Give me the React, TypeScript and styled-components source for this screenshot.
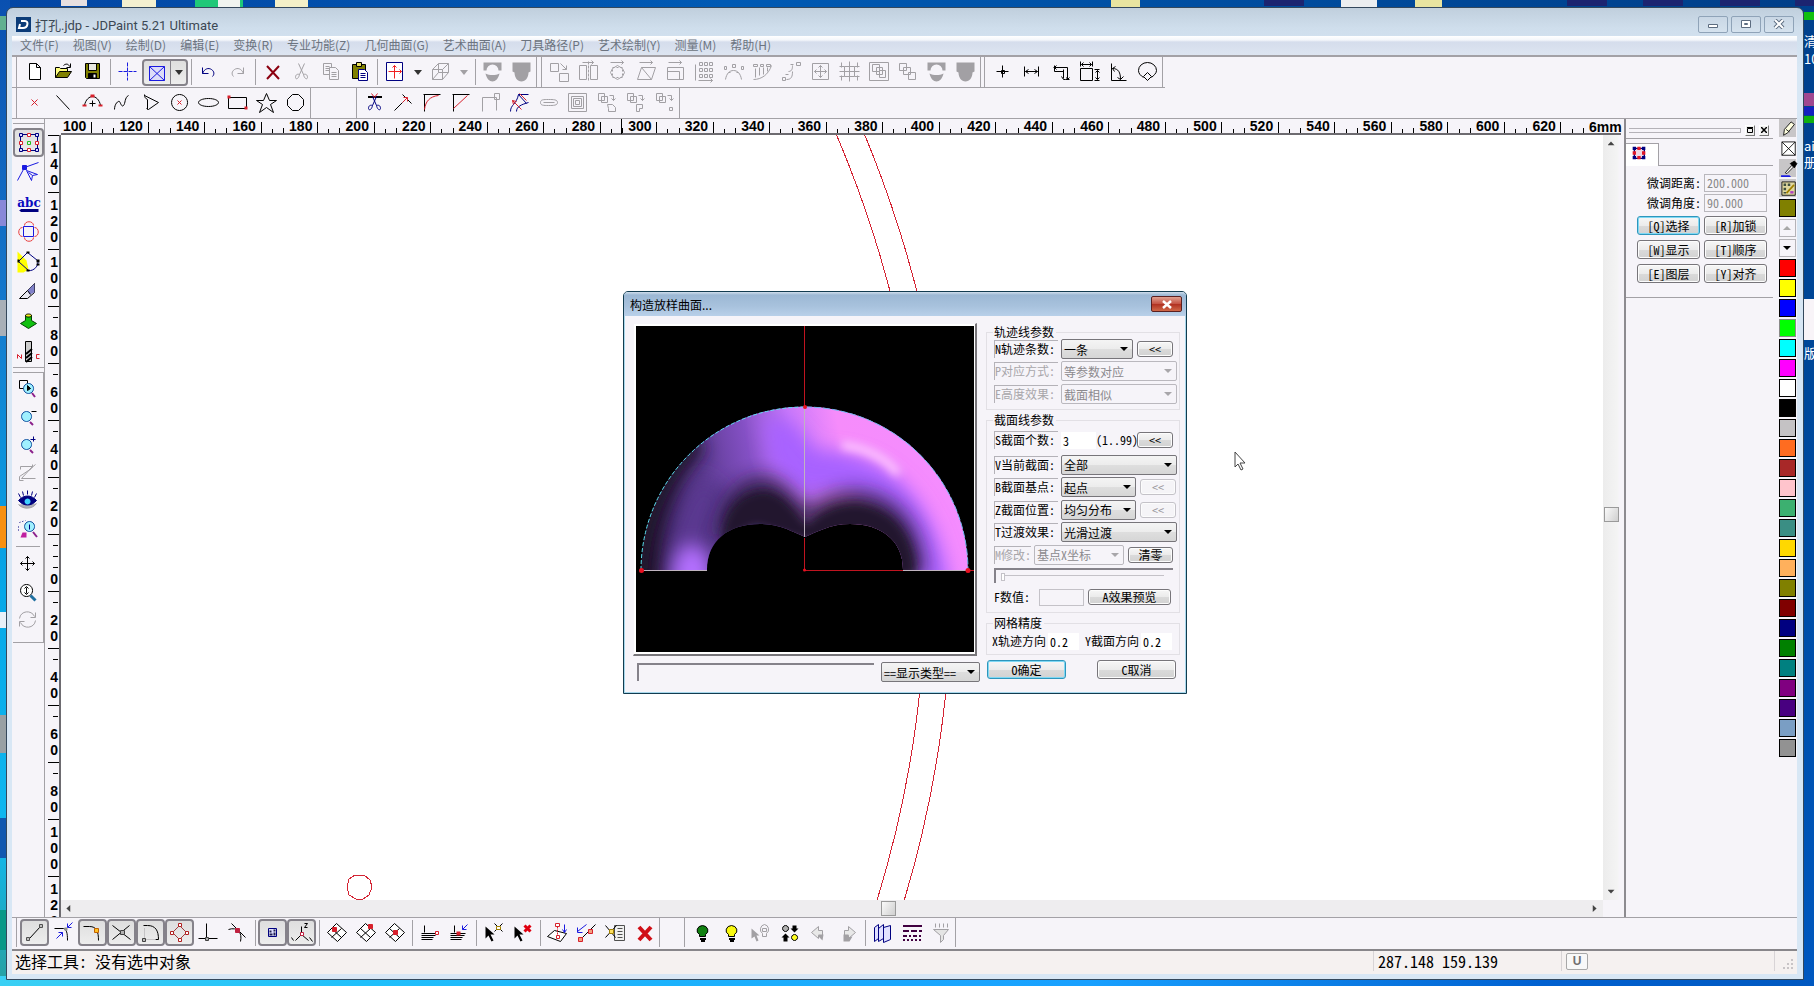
import React from "react";
import styled, { createGlobalStyle, css } from "styled-components";

const SONG = `"Noto Sans CJK SC", sans-serif`;
const LINE = "#a3a1a6";
const FACE = "#f6f4f9";

const GlobalStyle = createGlobalStyle`
  * { box-sizing: border-box; }
  body { margin: 0; overflow: hidden; font-family: ${SONG}; font-size: 12px; color: #000; }
  button, input, select { font: inherit; color: inherit; }
`;

/* ---------- icons ---------- */

type Part = [d: string, stroke: string, fill?: string, width?: number, dash?: string];
const G = "#a2a0a4";
const K = "#000";
const R = "#d8202c";
const B = "#1a1ae0";
const N = "#000080";
const Y = "#a08000";

const ICONS: Record<string, Part[]> = {
  new: [["M7 4h7l4 4v12H7zM14 4v4h4", K, "#fff"]],
  open: [["M4 18V8h4l1 1h7v3", K, "#ffff80"], ["M4 18l4-6h12l-4 6z", K, "#808000"], ["M12 6c2-2 5-2 6 1M19 4v4h-4", K]],
  save: [["M5 4h14v15H6l-1-1z", K, "#808000"], ["M8 4h8v7H8z", K, "#e8e8e0"], ["M8 14h8v5H8z", K, K], ["M13 15h2v3h-2z", "none", "#fff"]],
  cross: [["M12 3v18", B, "none", 1, "4 1"], ["M3 12h18", B, "none", 1, "4 1"]],
  boxx: [["M5 5h15v14H5z", B, "#dcdcf8"], ["M5 5l15 14M20 5L5 19", B]],
  undo: [["M6 8v6h6M6 14c2-5 6-6 9-4s3 5 1 7", N]],
  redo: [["M18 8v6h-6M18 14c-2-5-6-6-9-4s-3 5-1 7", G]],
  del: [["M6 6l12 13M18 6L6 19", "#8c0010", "none", 2]],
  cut: [["M9 4l5 11M15 4l-5 11M10 15c-3-1-4 1-4 3s3 2 4-3M14 15c3-1 4 1 4 3s-3 2-4-3", G]],
  copy: [["M5 4h8v11H5zM7 7h4M7 9h4M7 11h4", G], ["M11 8h6l3 3v9h-9zM13 13h5M13 15h5M13 17h5", G, FACE]],
  paste: [["M5 5h13v14H5z", K, "#808000"], ["M9 3h5v4H9z", K, "#e8e060"], ["M11 10h6l3 3v8h-9z", N, "#fff"], ["M13 14h5M13 16h5M13 18h5", N]],
  axes: [["M4 3h16v18H4z", N, "#fff"], ["M12 6v13M6 12h13M10 8l2-2 2 2M17 10l2 2-2 2", "#f02020"]],
  cube: [["M4 10h10v10H4zM4 10l6-6h10l-6 6M20 4v9l-6 7M10 4v9H20M10 13l-6 7", G]],
  shieldA: [["M3 3h18v8h-3a6 6 0 0 0-12 0H3z", "none", G], ["M5 14c4 2 10 2 14 0c-1 5-4 8-7 8s-6-3-7-8z", "none", G]],
  shieldB: [["M3 3h18v9l-2 1c0 5-3 9-7 9s-7-4-7-9l-2-1z", "none", G]],
  moveDup: [["M3 4h8v8H3zM12 14h9v8h-9zM13 4l6 6M19 6v4h-4", G]],
  mirror: [["M3 6h7v14H3zM14 6h7v14h-7z", G], ["M12 2v20", G, "none", 1, "3 1"], ["M6 3h11M15 1l2 2-2 2", G]],
  rotate: [["M12 6l5 3 2 4-2 4-5 3-5-3-2-4 2-4zM5 3h13M16 1l2 2-2 2", G], ["M7 8h10v10H7z", G, "none", 1, "2 2"]],
  shear: [["M3 20l4-12h14l-4 12zM7 8l10 12M5 3h13M16 1l2 2-2 2", G]],
  scale: [["M4 8h16v12H4zM4 12h12v8M5 3h13M16 1l2 2-2 2", G]],
  array: [["M7 3h3v3H7zM12 3h3v3h-3zM17 3h3v3h-3zM7 9h3v3H7zM12 9h3v3h-3zM17 9h3v3h-3zM7 15h3v3H7zM12 15h3v3h-3zM17 15h3v3h-3zM3 5v16M6 21h14M18 19l2 2-2 2", G]],
  arcArr: [["M4 20c1-6 4-9 8-9s7 3 8 9M3 7h2v3H3zM11 5h3v3h-3zM20 7h2v3h-2zM7 13h2M15 13h2", G]],
  wrap: [["M3 5h4v2H3zM10 5h3v2h-3zM16 5h4v2h-4zM5 9v9M9 8v8M13 8v7M17 8v4M3 20c8 0 15-5 18-14", G]],
  path: [["M3 18h3v3H3zM6 15h3M9 12c4 0 4-4 4-6M11 5h3M17 3h4v3h-4zM7 20c5 0 6-3 6-8", G]],
  center: [["M4 4h16v16H4zM12 6v12M6 12h12M10 8l2-2 2 2M10 16l2 2 2-2M8 10l-2 2 2 2M16 10l2 2-2 2", G]],
  centerB: [["M7 7h10v10H7zM12 2v20M2 12h20M4 3v5M20 3v5M4 16v5M20 16v5M2 7h5M17 7h5M2 17h5M17 17h5", G]],
  group: [["M3 3h19v18H3zM6 5h7v7H6zM10 8h6v7h-6zM13 11h6v7h-6z", G]],
  ungroup: [["M4 4h7v7H4zM8 8h7v7H8zM13 13h7v7h-7z", G]],
  mPoint: [["M12 6v12M6 12h12M11 11h3v3h-3z", K]],
  mDist: [["M5 7v10M19 7v10M6 12h12M9 10l-3 2 3 2M15 10l3 2-3 2", K]],
  mStep: [["M6 6v6M5 8h14v12M8 6L6 8l2 2M15 10v9M13 17l2 3h2M9 12h6M17 20h4M6 12h5M18 18l1 2 2-2", K]],
  mBox: [["M3 9h12v12H3zM3 2v5M15 2v5M4 5h10M6 3L4 5l2 2M12 3l2 2-2 2M17 10h5M17 21h5M20 11v9M18 13l2-2 2 2M18 18l2 2 2-2", K]],
  mAng: [["M5 4v17h15M6 9c6 0 8 4 8 11M6 9l3-2M6 9l2 3M14 20l-3-2M14 20l3-3", K]],
  mRad: [["M3 11a9 8 0 0 1 18 0c0 3-3 5-5 7M3 11c0 3 2 5 5 7M12 21l-4-4 4-4 4 4z", K]],
  pt: [["M9 9l6 6M15 9l-6 6", R]],
  line: [["M5 5l13 14", K]],
  arc3: [["M4 15c1-6 5-9 8-9s7 3 8 9", K], ["M2 14h4v2H2zM10 4h4v3h-4zM18 14h4v2h-4z", "none", R], ["M12 10v6M9 13h6", K]],
  curve: [["M5 19c0-6 4-9 5-8s2 6 4 4 1-8 5-10", K]],
  poly: [["M6 4c0 3 1 4 3 5M6 5l14 7-10 7-2-1M9 9v10", K]],
  circle: [["M12 4a8 8 0 1 0 .1 0z", K], ["M10 10l4 4M14 10l-4 4", R]],
  ellipse: [["M12 8c6 0 10 2 10 4s-4 4-10 4-10-2-10-4 4-4 10-4z", K]],
  rect: [["M3 7h18v11H3z", K], ["M2 5h3v3H2zM19 16h3v3h-3z", "none", R]],
  star: [["M12 3l3 7h7l-6 4 3 8-7-5-7 5 3-8-6-4h7z", K]],
  octa: [["M9 4h6l5 5v6l-5 5H9l-5-5V9z", K]],
  trim: [["M5 6h14", K, "none", 2], ["M10 6l4 9M14 6l-4 9M10 15c-3-1-4 1-4 3s3 2 4-3M14 15c3-1 4 1 4 3s-3 2-4-3", N], ["M9 3l3 4 3-4", R]],
  extend: [["M3 20l8-8M11 4l9 9", K], ["M11 12l5-5M12 7h4v4", R]],
  fillet: [["M3 4h17M4 4v17", K], ["M4 19C5 11 9 6 18 5", R]],
  chamfer: [["M3 4h17M4 4v17", K], ["M4 18L18 5", R]],
  corner: [["M4 7h14v13M4 7v14M16 3h5v6h-5z", G]],
  offset: [["M3 21c0-7 6-7 8-17h10M9 21c0-5 5-7 12-9M11 4l8 9", N], ["M5 10l9 9M5 10l1 4M5 10l4 1M12 3l7 7", R]],
  slot: [["M4 12c0-3 3-3 8-3s9 0 9 3-4 3-9 3-8 0-8-3zM7 12h11", G]],
  spiral: [["M3 3h18v18H3zM6 6h12v12H6zM8 8h8v8H8zM10 10h4v4h-4z", G]],
  boolA: [["M4 3h6v7H4zM7 6h6v6H7zM15 5h4v5M17 8l2 2 2-2M13 14h5l3 3v4h-7v-3z", G]],
  boolB: [["M4 3h6v7H4zM7 6h6v6H7zM15 5h4v5M17 8l2 2 2-2M13 14h6v4h-3v3h-3z", G]],
  boolC: [["M4 3h6v7H4zM7 6h6v6H7zM15 5h4v5M17 8l2 2 2-2M17 17h3v3h-3z", G]],
  select: [["M4 4h17v16H4z", N], ["M3 3h3v3H3zM19 3h3v3h-3zM3 18h3v3H3zM19 18h3v3h-3z", N, "#d8d8ff"], ["M11 3h3v3h-3zM11 18h3v3h-3zM3 11h3v3H3zM19 11h3v3h-3z", R, "#fff"], ["M11 11h3v3h-3z", "#20c020"]],
  selectTab: [["M5 5h15v15H5z", N, "#f0d8e4", 2], ["M3 3h5v5H3zM17 3h5v5h-5zM3 17h5v5H3zM17 17h5v5h-5z", "none", N], ["M10 3h5v5h-5zM10 17h5v5h-5zM3 10h5v5H3zM17 10h5v5h-5z", "none", "#e01828"]],
  node: [["M1 21L8 8l14-5", B], ["M6 6h4v4H6z", B, B], ["M10 11l11 4-5 1M10 11l5 10 1-5M12 13l4 3", B]],
  text: [["M4 20h18M4 22h18M3 21h19", N, "none"]],
  shape: [["M7 7h10v10H7z", B], ["M8 6c0-5 9-5 9 0M18 8c5 0 5 9 0 9M17 18c0 5-9 5-9 0M6 17c-5 0-5-9 0-9", "#e84040"]],
  region: [["M1 2l9 9 2 9-5 3H1z", "none", "#ffff00"], ["M2 12l9-9 10 8c2 5-4 11-9 10z", N, "none"], ["M10 2h3v2h-3zM20 10h3v3h-3zM10 20h3v2h-3zM20 14h3v2h-3zM1 10h2v3H1z", "none", K]],
  blade: [["M3 19l8-8 7-7v9l-7 6z", K, "#e8e8f0"], ["M11 11l7-7v9l-5 2z", "none", "#8080c8"], ["M11 11l3 4", K]],
  relief: [["M4 14l5-3V6h6v5l5 3-8 5z", "#004000", "#10c010"], ["M9 6c0-2 6-2 6 0s-6 2-6 0z", K, "#f0f020"]],
  nc: [["M9 2h6v20H9z", K, "#ccc"], ["M9 14l6-5M9 18l6-5M9 22l6-5", K, "none", 2], ["M1 19v-4l4 4v-4M23 15h-3v4h3", R]],
  zWin: [["M4 4h8v8H4z", K], ["M13 7a5 5 0 1 0 .1 0z", "#1050a0", "#a0f0ff"], ["M12 9v5l3-2z", K, K], ["M16 16l3 4", "#8c208c", "none", 2]],
  zOut: [["M11 7a5 5 0 1 0 .1 0z", "#1050a0", "#a0f0ff"], ["M14 17l3 3", "#8c208c", "none", 2], ["M16 7h5", K]],
  zIn: [["M11 7a5 5 0 1 0 .1 0z", "#1050a0", "#a0f0ff"], ["M14 17l3 3", "#8c208c", "none", 2], ["M15 7h5M18 4v5", N]],
  zPrev: [["M5 6h12L6 18h14M5 6v3M17 4v3M14 9l6-5M8 20H4v-4l12-8", G]],
  eye: [["M3 16c4 5 14 5 18-1", G, "#b0b0b8"], ["M3 12c5-6 13-6 18 0-5 6-13 6-18 0z", N, N], ["M12 10a3 3 0 1 0 .1 0z", "none", "#40d0ff"], ["M5 9L3 5M8 7L7 3M12 6V2M16 7l1-4M19 9l2-4", N]],
  zObj: [["M4 6l6-2M3 10v5", N, "none", 1, "1 2"], ["M14 5a5 5 0 1 0 .1 0z", "#1050a0", "#a0f0ff"], ["M14 8v5", N], ["M17 15l4 5", "#8c208c", "none", 2], ["M7 16h4v5H5z", "none", "#c020a0"]],
  pan: [["M12 5v14M5 12h14M10 7l2-2 2 2M10 17l2 2 2-2M7 10l-2 2 2 2M17 10l2 2-2 2", K]],
  zDyn: [["M11 5a6 6 0 1 0 .1 0z", K, "#fff"], ["M11 8v6M9 9l2-2 2 2M9 13l2 2 2-2", K], ["M15 16l5 5", "#2070a0", "none", 3]],
  refresh: [["M4 11c1-8 12-9 15-2M20 5v5h-5M20 13c-1 8-12 9-15 2M4 19v-5h5", G]],
  sEnd: [["M7 18L18 6", K], ["M4 17h3v3H4zM17 4h3v3h-3z", "#505050", "#c0c0c0"]],
  sNear: [["M3 8h9c3 1 4 4 4 12", K], ["M21 2l-5 5M16 3v4h4M5 18l6-6M7 12h4v4", B], ["M13 7h3v3h-3z", "none", "#909090"]],
  sMid: [["M3 6h6c7 0 9 5 9 14", K], ["M14 8h4v4h-4z", "#c06000", "#ffc020"]],
  sInt: [["M3 5l18 14M3 19L20 5", K], ["M11 10h4v4h-4z", "#404040", "#b0b0b0"]],
  sCen: [["M5 5h4c8 0 11 5 11 14h-3", K], ["M6 8v10M8 19h9", G, "none", 1, "1 1"], ["M4 18h3v3H4z", "#404040", "#c0c0c0"]],
  sQuad: [["M12 5l7 7-7 7-7-7z", "#a04040"], ["M11 3h3v3h-3zM11 18h3v3h-3zM3 11h3v3H3zM18 11h3v3h-3z", "#b02020", "#fff"]],
  sPerp: [["M10 3v15M2 18h19", K], ["M9 17h3v3H9z", "#404040", "#b0b0b0"]],
  sTan: [["M3 9c9-3 14 3 12 12M6 3l14 14", K], ["M10 8h4v4h-4z", "#c02040", "#c02040"]],
  sGrid: [["M8 8h8v8H8z", N, "#dfe0ff"], ["M9 10h2v2H9zM13 12h2v3h-2zM13 9h2v2h-2zM9 13h3v2H9z", "none", "#202050"]],
  sAxis: [["M12 6v8l-6 6M12 14l7 6M2 17l2 3M20 17l3 4M15 3h3l-3 4h3", K], ["M11 12h3v3h-3z", "#c02040", "#fff"]],
  fA: [["M12 3l10 9-9 9-10-9zM7 8l10 9M17 8L7 17", K, "#fff"], ["M8 7h4v4H8z", R, R]],
  fB: [["M12 3l10 9-9 9-10-9zM7 8l10 9M17 8L7 17", K, "#fff"], ["M15 4h4v4h-4z", R, R]],
  fC: [["M12 3l10 9-9 9-10-9zM7 8l10 9M17 8L7 17", K, "#fff"], ["M11 10h4v4h-4z", R, R]],
  lA: [["M7 5v7M4 13h15M4 15h14M4 17h12M4 19h11", K], ["M18 11h3v3h-3z", R, "#fff"]],
  lB: [["M8 5v7M4 13h15M4 15h14M4 17h12M4 19h11", K], ["M21 4l-5 5M16 5v4h4", B], ["M10 11h4v4h-4z", "none", R]],
  pA: [["M4 6v12l3-3 3 6 2-1-3-6h4z", "none", K], ["M13 3l8 8M21 3l-8 8", K], ["M15 6h4v3h-4z", Y, "#fff"]],
  pB: [["M4 6v12l3-3 3 6 2-1-3-6h4z", "none", K], ["M14 5l6 6M20 5l-6 6", "#e00010", "none", 3]],
  plA: [["M2 16l7-6 12 3-6 8z", K, "#fff"], ["M12 6v10", R, "none", 1, "2 1"], ["M10 3h4v3h-4zM11 15h3v3h-3z", R, "#fff"], ["M19 4v8M17 9l2 3 2-3", B]],
  plB: [["M5 20L21 4", K], ["M3 11l9-7M3 7v5h5", B], ["M4 17h4v4H4zM14 9h4v4h-4z", R, "#f0a080"]],
  plC: [["M11 5h10v15H11zM14 8h5M14 11h5M14 14h5M14 17h5", "#505050", "#f0f0f0"], ["M2 5l10 12M2 17L13 5", K], ["M6 9h4v4H6z", Y, "#ffe060"]],
  delB: [["M6 6l12 13M18 6L6 19", "#d01018", "none", 4]],
  bulbG: [["M12 5a6 5 0 0 0-3 9v2h6v-2a6 5 0 0 0-3-9z", K, "#108010"], ["M9 18h6M10 20h4", K, "none", 2]],
  bulbY: [["M12 5a6 5 0 0 0-3 9v2h6v-2a6 5 0 0 0-3-9z", K, "#f8f810"], ["M9 18h6M10 20h4", K, "none", 2]],
  bulbP: [["M3 8v10l3-2 2 5 2-1-2-5h3z", "none", G], ["M16 4a5 5 0 0 0-2 9v3h4v-3a5 5 0 0 0-2-9zM14 8h4v3h-4z", G]],
  swap: [["M8 5a3 3 0 1 0 .1 0z", K, "#b0b0b0"], ["M17 14a3 3 0 1 0 .1 0z", K, "#ffff20"], ["M15 5h4v3h2l-4 4-4-4h2zM6 21V17H4l4-4 4 4h-2v4z", "none", K]],
  left: [["M5 12l7-6v4h4v5h-4v3z", G, "#e8e8e8"], ["M12 14h5l-1 6-4-4z", "none", G]],
  right: [["M20 12l-7-6v4H9v5h4v3z", G, "#e8e8e8"], ["M8 14h5v3l4-1-3 5H8z", "none", G]],
  layers: [["M4 7l4-3v14l-4 3zM8 8l5-4v14l-5 3zM13 7l7-2v14l-7 3z", N, "#e0e0ff"]],
  styles: [["M3 5h19", "#400040", "none", 2], ["M3 10h19", "#400040", "none", 2, "6 2"], ["M3 15h19", "#400040", "none", 2, "4 2 2 2"], ["M3 19h19", "#400040", "none", 2, "2 2"]],
  filter: [["M5 9h15l-5 6v4l-3 3v-7zM7 3v4M11 3v4M15 3v4M19 3v4", G, "#e4e4e4"]],
  pencil: [["M6 20l1-7 8-9 4 3-8 10z", K, "#ffffe0"], ["M9 13l4 3", K]],
  noFill: [["M4 4h16v16H4zM4 4l16 16M20 4L4 20", K, "#fff"]],
  dropper: [["M8 17l8-9 2 2-8 8z", K, "#fff"], ["M14 6l5 5 3-5-3-3z", K, K], ["M3 20h10l2 2H3z", "none", B]],
  palette: [["M4 4h16v16H4z", K, "#e0d8a0"], ["M6 6h3v3H6zM11 6h3v3h-3zM6 11h3v3H6zM6 16h3v2H6z", "none", "#405040"], ["M9 17l9-10", Y, "none", 2], ["M14 15h4v3h-4z", "none", "#b040c0"]],
};

const IconSvg = styled.svg`
  display: block;
  flex: none;
`;

const Icon = ({ name, size = 24 }: { name: string; size?: number }) => (
  <IconSvg width={size} height={size} viewBox="0 0 24 24" aria-hidden="true">
    {ICONS[name].map(([d, stroke, fill = "none", w = 1, dash], i) => (
      <path key={i} d={d} stroke={stroke} fill={fill} strokeWidth={w} strokeDasharray={dash} transform={w % 2 ? "translate(-.5 -.5)" : undefined} />
    ))}
    {name === "text" && (
      <text x="12" y="17" textAnchor="middle" fontFamily="DejaVu Serif, serif" fontWeight="700" fontSize="12" fill="#0808c0">abc</text>
    )}
  </IconSvg>
);

/* ---------- desktop and window frame ---------- */

const Desktop = styled.div`
  position: relative;
  display: flex;
  height: 100vh;
  padding: 7px 10px 6px 6px;
  overflow: hidden;
  background:
    linear-gradient(90deg, #3ad0f4 0, #1fc0fb 20%, #18a0ff 60%, #0060d0 85%, #0058c0 100%) bottom / 100% 10px no-repeat,
    linear-gradient(#00408c, #00489a 40%, #0058c0) right / 12px 100% no-repeat,
    linear-gradient(#0a50b0, #1478cc 30%, #06a8e8 60%, #10b8f0 85%, #28a0a0) left / 10px 100% no-repeat,
    linear-gradient(90deg, #0446a4, #005ab4 40%, #003e88);
`;

const Scrap = styled.span<{ $x: string; $y: number; $w: number; $h: number; $c: string }>`
  position: absolute;
  left: ${(p) => p.$x};
  top: ${(p) => p.$y}px;
  width: ${(p) => p.$w}px;
  height: ${(p) => p.$h}px;
  background: ${(p) => p.$c};
`;

const DeskLabel = styled.span<{ $y: number }>`
  position: absolute;
  right: -4px;
  top: ${(p) => p.$y}px;
  width: 14px;
  color: #fff;
  font-size: 13px;
  line-height: 16px;
  white-space: nowrap;
`;

const Win = styled.div`
  position: relative;
  display: flex;
  flex: 1;
  flex-direction: column;
  min-width: 0;
  padding: 0 6px 5px 5px;
  border: 1px solid #34485c;
  border-radius: 7px 7px 0 0;
  background: linear-gradient(#c0cfdd, #cfdeec 20px, #d8e7f5 60px);
`;

const TitleBar = styled.header`
  display: flex;
  flex: none;
  align-items: center;
  height: 28px;
  padding: 4px 3px 0 4px;
  gap: 4px;
  color: #3c4854;
  font-family: Roboto, "Noto Sans CJK SC", sans-serif;
  font-size: 13px;
  white-space: nowrap;
`;

const Logo = styled.svg`
  flex: none;
`;

const TitleText = styled.h1`
  flex: 1;
  margin: 0;
  font: inherit;
`;

const CaptionButtons = styled.div`
  display: flex;
  gap: 3px;
`;

const CaptionButton = styled.button`
  display: grid;
  place-items: center;
  width: 30px;
  height: 17px;
  padding: 0;
  border: 1px solid #8fa3b8;
  border-radius: 2px;
  background: linear-gradient(#c9d7e5, #d5e2ee);
`;

const MenuBar = styled.nav`
  display: flex;
  flex: none;
  align-items: center;
  height: 19px;
  padding: 0 0 1px 8px;
  gap: 14px;
  background: linear-gradient(#fff 0, #f4f7fb 4px, #d5ddec 6px, #dde5f1 100%);
`;

const MenuItem = styled.button`
  padding: 0;
  border: 0;
  background: none;
  color: #6c7480;
  font-size: 12px;
  line-height: 18px;
  white-space: nowrap;
`;

/* ---------- toolbars ---------- */

const ToolbarArea = styled.div`
  flex: none;
  border-top: 2px solid ${LINE};
  background: ${FACE};
`;

const ToolbarRow = styled.div`
  display: flex;
  height: 31px;
  border-bottom: 1px solid ${LINE};
`;

const ToolRowShort = styled(ToolbarRow)`
  width: 1153px;
  max-width: 100%;
`;

const ToolGroup = styled.div<{ $gap?: number }>`
  display: flex;
  align-items: center;
  padding-left: 3px;
  margin-left: ${(p) => p.$gap ?? 4}px;
  border-left: 1px solid ${LINE};
  border-right: 1px solid ${LINE};
`;

const ToolButton = styled.button<{ $on?: boolean; $w?: number; $h?: number }>`
  display: grid;
  flex: none;
  place-items: center;
  width: ${(p) => p.$w ?? 29}px;
  height: ${(p) => p.$h ?? 27}px;
  padding: 0;
  border: 1px solid transparent;
  background: none;
  ${(p) =>
    p.$on &&
    css`
      border: 2px solid #85828a;
      border-radius: 4px;
      background: linear-gradient(#dedede, #ededed);
    `}
`;

const Sep = styled.span`
  flex: none;
  width: 1px;
  height: 26px;
  margin: 0 2px 0 3px;
  background: ${LINE};
`;

const Drop = styled.button`
  display: grid;
  flex: none;
  place-items: center;
  width: 17px;
  height: 26px;
  padding: 0;
  border: 0;
  background: none;
  &::after {
    content: "";
    border: 4px solid transparent;
    border-top: 5px solid #333;
    border-bottom: 0;
  }
  &:disabled::after { border-top-color: ${G}; }
`;

const SplitOn = styled.span`
  display: flex;
  flex: none;
  align-items: center;
  width: 46px;
  height: 27px;
  overflow: hidden;
  border: 2px solid #85828a;
  border-radius: 4px;
  background: linear-gradient(#dedede, #ededed);
  ${Drop} { border-left: 1px solid #85828a; }
`;

const Tool = ({ n, on }: { n: string; on?: boolean }) => (
  <ToolButton type="button" aria-label={n} aria-pressed={on} $on={on}>
    <Icon name={n} />
  </ToolButton>
);

const Tools = ({ list }: { list: string }) => (
  <>
    {list.split(" ").map((t, i) =>
      t === "|" ? <Sep key={i} /> : <Tool key={i} n={t.replace("*", "")} on={t.endsWith("*")} />
    )}
  </>
);

/* ---------- workspace ---------- */

const Main = styled.main`
  display: flex;
  flex: 1;
  min-height: 0;
  background: ${FACE};
`;

const SideTools = styled.aside`
  display: flex;
  flex: none;
  flex-direction: column;
  align-items: center;
  width: 33px;
  padding: 4px 0 0 1px;
  border-right: 1px solid ${LINE};
`;

const SideGroup = styled.div<{ $first?: boolean }>`
  display: flex;
  flex-direction: column;
  align-items: center;
  width: 100%;
  padding: ${(p) => (p.$first ? "4px 0 0" : "2px 0 8px")};
  margin-bottom: ${(p) => (p.$first ? 4 : 0)}px;
  border-top: 1px solid ${LINE};
  border-bottom: 1px solid ${LINE};
  border-right: ${(p) => (p.$first ? 0 : 1)}px solid ${LINE};
`;

const SideSep = styled.span`
  width: 24px;
  height: 1px;
  margin: 3px 0;
  background: ${LINE};
`;

const Workspace = styled.section`
  display: grid;
  flex: 1;
  grid-template-columns: 16px 1fr 18px;
  grid-template-rows: 16px minmax(0, 1fr) 17px;
  min-width: 0;
`;

const HRuler = styled.div`
  position: relative;
  display: flex;
  grid-column: 2 / 4;
  padding-left: 2px;
  border-bottom: 2px solid #6d6b70;
  font: bold 14px/16px "Liberation Sans", sans-serif;
`;

const HSeg = styled.div`
  display: flex;
  flex: 1 1 0;
  align-items: flex-end;
  min-width: 0;
`;

const HLabel = styled.span`
  flex: none;
  width: 28px;
  height: 15px;
`;

const HTick = styled.i<{ $h: number; $grow: number }>`
  flex: ${(p) => p.$grow} 1 0;
  height: ${(p) => p.$h}px;
  border-left: 1px solid #000;
`;

const HUnit = styled.span`
  flex: none;
  width: 32px;
`;

const HMarker = styled.i`
  position: absolute;
  left: 560px;
  top: 0;
  height: 15px;
  border-left: 1px solid #000;
`;

const VRuler = styled.div`
  grid-row: 2 / 4;
  overflow: hidden;
  border-right: 2px solid #6d6b70;
  font: bold 14px/16px "Liberation Sans", sans-serif;
`;

const VSeg = styled.div`
  position: relative;
  display: flex;
  flex-direction: column;
  align-items: flex-end;
  justify-content: flex-end;
  height: 57px;
  margin-left: 3px;
  padding: 0 1px 4px 0;
  border-top: 1px solid #000;
`;

const VTicks = styled.span`
  display: flex;
  flex: 1;
  flex-direction: column;
  align-items: flex-end;
  padding-top: 10px;
  gap: 10px;
  i { width: 5px; border-top: 1px solid #000; }
`;

const Canvas = styled.div`
  position: relative;
  grid-column: 2;
  grid-row: 2;
  overflow: hidden;
  background: #fff;
`;

const Drawing = styled.svg`
  position: absolute;
  inset: 0;
  width: 100%;
  height: 100%;
`;

const Scroll = styled.div<{ $v?: boolean }>`
  display: flex;
  flex-direction: ${(p) => (p.$v ? "column" : "row")};
  align-items: center;
  padding: ${(p) => (p.$v ? "5px 2px 5px 0" : "0 5px 0 4px")};
  background: ${(p) => (p.$v ? "linear-gradient(90deg,#ececec,#f4f4f4 15px,#f6f4f9 16px)" : "#eeedef")};
`;

const ScrollArrow = styled.button<{ $dir: "up" | "down" | "left" | "right" }>`
  flex: none;
  width: 7px;
  height: 7px;
  padding: 0;
  border: 0;
  background: #444;
  clip-path: ${(p) =>
    ({
      up: "polygon(50% 20%,100% 75%,0 75%)",
      down: "polygon(0 25%,100% 25%,50% 80%)",
      left: "polygon(20% 50%,75% 0,75% 100%)",
      right: "polygon(25% 0,80% 50%,25% 100%)",
    })[p.$dir]};
`;

const Space = styled.span<{ $grow: number }>`
  flex: ${(p) => p.$grow} 1 0;
`;

const Thumb = styled.span`
  flex: none;
  width: 15px;
  height: 15px;
  border: 1px solid #9a9a9a;
  background: linear-gradient(120deg, #fafafa, #cfcfcf);
`;

/* ---------- right panel ---------- */

const Panel = styled.aside`
  display: flex;
  flex: none;
  flex-direction: column;
  width: 149px;
  margin-left: 3px;
  border-left: 2px solid #8d8b90;
`;

const PanelHead = styled.div`
  display: flex;
  align-items: center;
  height: 20px;
  padding: 3px 4px 0 3px;
  gap: 4px;
  border-bottom: 1px solid ${LINE};
`;

const Grip = styled.span`
  flex: 1;
  height: 5px;
  border: 1px solid #b4b2b8;
  border-width: 1px 1px 1px 0;
`;

const MiniButton = styled.button`
  display: grid;
  place-items: center;
  width: 10px;
  height: 11px;
  padding: 0;
  border: 1px solid;
  border-color: #fff #777 #777 #fff;
  background: #f0f0f0;
`;

const TabRow = styled.div`
  display: flex;
  align-items: flex-end;
  height: 27px;
  &::after {
    content: "";
    flex: 1;
    border-bottom: 1px solid ${LINE};
  }
`;

const Tab = styled.button`
  display: grid;
  place-items: center;
  width: 33px;
  height: 23px;
  padding: 0 6px 4px 0;
  border: 1px solid ${LINE};
  border-width: 1px 1px 0 0;
  background: #fff;
`;

const PanelBody = styled.div`
  padding: 7px 6px 14px 9px;
  border-bottom: 1px solid ${LINE};
`;

const NudgeRow = styled.label`
  display: flex;
  align-items: center;
  justify-content: flex-end;
  height: 20px;
  gap: 3px;
  font-feature-settings: "hwid";
  line-height: 16px;
  padding-bottom: 1px;
`;

const NudgeInput = styled.input`
  width: 63px;
  height: 18px;
  padding: 0 2px;
  border: 1px solid #b9b7bc;
  background: transparent;
  color: #888;
  font-feature-settings: "hwid";
`;

const PanelButtons = styled.div`
  display: grid;
  grid-template-columns: 1fr 1fr;
  gap: 5px 4px;
  margin-top: 3px;
  padding-left: 2px;
`;

const Push = styled.button<{ $w?: number; $primary?: boolean }>`
  display: block;
  flex: none;
  width: ${(p) => (p.$w ? `${p.$w}px` : "auto")};
  height: 19px;
  padding: 0;
  border: 1px solid ${(p) => (p.$primary ? "#2e96bc" : "#77757a")};
  border-radius: 3px;
  background: linear-gradient(#f6f6f6, #ebebeb 50%, #dadada 51%, #d2d2d2);
  box-shadow: inset 0 0 0 1px ${(p) => (p.$primary ? "#7fd8f4" : "#fcfcfc")};
  color: #000;
  font-size: 12px;
  line-height: 15px;
  font-feature-settings: "hwid";
  white-space: nowrap;
  &:disabled {
    border-color: #c4c2c8;
    background: #f5f4f7;
    color: #9a989c;
  }
`;

const SmallPush = styled(Push)`
  height: 16px;
  line-height: 12px;
`;

const Palette = styled.div`
  display: flex;
  flex: none;
  flex-direction: column;
  align-items: center;
  width: 24px;
  gap: 2px;
  padding-left: 4px;
`;

const Swatch = styled.button<{ $c: string; $tool?: boolean; $picked?: boolean }>`
  display: grid;
  flex: none;
  place-items: center;
  width: 17px;
  height: 18px;
  padding: 0;
  border: ${(p) => (p.$tool ? "0" : p.$picked ? "1px solid #8a8a8a" : "1px solid #000")};
  background: ${(p) => p.$c};
`;

const PaletteArrow = styled.button<{ $up?: boolean }>`
  display: grid;
  flex: none;
  place-items: center;
  width: 17px;
  height: 18px;
  padding: 0;
  border: 1px solid #b5b3b8;
  background: ${FACE};
  &::after {
    content: "";
    border: 4px solid transparent;
    ${(p) => (p.$up ? "border-top: 0; border-bottom-color: #a8a8a8;" : "border-bottom: 0; border-top-color: #000;")}
  }
`;

/* ---------- bottom bars ---------- */

const BottomBar = styled.div`
  display: flex;
  flex: none;
  height: 32px;
  padding-bottom: 2px;
  border-top: 1px solid ${LINE};
  background: ${FACE};
`;

const StatusBar = styled.footer`
  display: flex;
  flex: none;
  align-items: center;
  height: 25px;
  padding: 0 2px 3px 3px;
  border-top: 2px solid #88868a;
  background: #f5f1f0;
  font-size: 16px;
  line-height: 20px;
  font-feature-settings: "hwid";
  white-space: nowrap;
`;

const StatusCell = styled.span<{ $w?: number }>`
  flex: ${(p) => (p.$w ? "none" : "1")};
  width: ${(p) => (p.$w ? `${p.$w}px` : "auto")};
  padding-right: 4px;
  border-right: 1px solid #d8d4d6;
`;

const StatusCoord = styled(StatusCell)`
  padding-left: 4px;
`;

const KeyState = styled.button`
  width: 22px;
  height: 17px;
  margin: 0 4px;
  padding: 0;
  border: 1px solid #a8a8a8;
  border-radius: 2px;
  background: #f8f8f8;
  color: #707070;
  font: bold 12px/14px "Liberation Sans", sans-serif;
`;

const SizeGrip = styled.svg`
  flex: none;
  margin: 6px 2px 0 8px;
`;

/* ---------- dialog ---------- */

const Dialog = styled.section`
  position: absolute;
  left: 562px;
  top: 156px;
  width: 564px;
  border: 1px solid #123c50;
  border-radius: 5px 5px 0 0;
  background: ${FACE};
  box-shadow: inset 0 0 0 1px #a8d8ec;
`;

const DialogTitle = styled.header`
  display: flex;
  align-items: center;
  justify-content: space-between;
  height: 24px;
  padding: 0 4px 0 6px;
  border-radius: 4px 4px 0 0;
  background: linear-gradient(#d0deec 0, #9cb8d4 3px, #a8c2dd 60%, #b8d0e9);
  h2 { margin: 0; font: inherit; }
`;

const CloseButton = styled.button`
  display: grid;
  place-items: center;
  width: 31px;
  height: 16px;
  padding: 0;
  border: 1px solid #5a2020;
  border-radius: 2px;
  background: linear-gradient(#e0a090, #c45040 50%, #b03020 51%, #d06848);
`;

const DialogBody = styled.div`
  display: flex;
  justify-content: space-between;
  padding: 7px 6px 11px 9px;
`;

const PreviewColumn = styled.div`
  width: 347px;
`;

const PreviewFrame = styled.div`
  width: 344px;
  padding: 2px;
  border: 1px solid;
  border-color: ${FACE} #77757a #77757a ${FACE};
  border-width: 1px 2px 2px 1px;
  background: #fff;
  svg { display: block; background: #000; }
`;

const PreviewFoot = styled.div`
  display: flex;
  align-items: center;
  justify-content: space-between;
  margin-top: 6px;
  padding-left: 4px;
`;

const MessageBox = styled.input`
  width: 237px;
  height: 18px;
  border: 0 solid #85828a;
  border-width: 2px 0 0 2px;
  background: transparent;
`;

const FormColumn = styled.div`
  display: flex;
  flex-direction: column;
  width: 194px;
  padding-top: 2px;
`;

const Group = styled.fieldset`
  margin: 0 0 3px;
  padding: 0 4px 4px 7px;
  border: 1px solid #e2e0e5;
  min-width: 0;
  legend {
    padding: 0 2px 0 1px;
    margin-left: -1px;
    line-height: 14px;
  }
`;

const GridGroup = styled(Group)`
  margin-bottom: 3px;
  padding: 0 7px 2px 5px;
  legend { margin-left: 1px; }
`;

const Field = styled.div<{ $h?: number; $off?: boolean }>`
  display: flex;
  align-items: center;
  height: ${(p) => p.$h ?? 22}px;
  color: ${(p) => (p.$off ? "#a8a6aa" : "#000")};
  font-feature-settings: "hwid";
  white-space: nowrap;
`;

const Label = styled.label<{ $w?: number }>`
  flex: none;
  width: ${(p) => p.$w ?? 64}px;
  height: 18px;
  margin-right: 3px;
  border-top: 1px solid #b4b2b8;
  border-left: 1px solid #b4b2b8;
  line-height: 15px;
`;

const BareLabel = styled.label<{ $w: number }>`
  flex: none;
  width: ${(p) => p.$w}px;
  line-height: 16px;
`;

const SelectBox = styled.span<{ $w: number; $off?: boolean }>`
  position: relative;
  flex: none;
  width: ${(p) => p.$w}px;
  ${Field} & { margin-right: 4px; }
  &::after {
    content: "";
    position: absolute;
    right: 5px;
    top: 8px;
    border: 4px solid transparent;
    border-top-color: ${(p) => (p.$off ? "#a8a6aa" : "#000")};
    border-bottom: 0;
    pointer-events: none;
  }
`;

const SelectInput = styled.select`
  display: block;
  width: 100%;
  height: 20px;
  padding: 0 2px;
  appearance: none;
  border: 1px solid #77757a;
  border-radius: 2px;
  background: linear-gradient(#f4f4f4, #ececec 50%, #dedede 51%, #d6d6d6);
  line-height: 17px;
  font-feature-settings: "hwid";
  &:disabled {
    border-color: #bab8be;
    background: ${FACE};
    color: #8c8a8e;
    opacity: 1;
  }
`;

const NumInput = styled.input<{ $w: number; $flat?: boolean }>`
  flex: none;
  width: ${(p) => p.$w}px;
  height: 17px;
  padding: 0 2px;
  border: ${(p) => (p.$flat ? "1px solid #c4c2c8" : "0")};
  background: ${(p) => (p.$flat ? "transparent" : "#fff")};
  font-feature-settings: "hwid";
`;

const Slider = styled.input`
  display: block;
  width: 179px;
  height: 15px;
  margin: 2px 0 3px;
  appearance: none;
  border: 0 solid #85828a;
  border-width: 2px 0 0 2px;
  background: linear-gradient(#c4c2c8, #c4c2c8) 8px 5px / 160px 1px no-repeat;
  &::-webkit-slider-thumb {
    appearance: none;
    width: 4px;
    height: 8px;
    margin-left: 5px;
    border: 1px solid #c4c2c8;
    background: #fff;
  }
`;

const DialogButtons = styled.div`
  display: flex;
  justify-content: space-between;
  margin-top: 2px;
  padding: 0 4px 0 1px;
`;

const Select = ({ id, w, text, off }: { id: string; w: number; text: string; off?: boolean }) => (
  <SelectBox $w={w} $off={off}>
    <SelectInput id={id} disabled={off} defaultValue={text}>
      <option>{text}</option>
    </SelectInput>
  </SelectBox>
);

const TorusPreview = () => (
  <svg width="338" height="326" viewBox="0 0 338 326" role="img" aria-label="放样曲面预览">
    <defs>
      <clipPath id="ring">
        <path d="M5 244A163.500 163.500 0 0 1 332 244L267 244C267 213 244 198 214 198C194 198 181 206 169 211C157 206 144 198 124 198C92 198 71 215 71 244Z" />
      </clipPath>
      <linearGradient id="sweep" gradientUnits="userSpaceOnUse" x1="5" y1="200" x2="332" y2="130">
        <stop offset="0" stopColor="#22132f" />
        <stop offset=".1" stopColor="#38225a" />
        <stop offset=".22" stopColor="#5e3c94" />
        <stop offset=".36" stopColor="#8450c4" />
        <stop offset=".5" stopColor="#c878fa" />
        <stop offset=".64" stopColor="#f68cfb" />
        <stop offset="1" stopColor="#f48cff" />
      </linearGradient>
      <filter id="b4" filterUnits="userSpaceOnUse" x="-40" y="-40" width="420" height="400"><feGaussianBlur stdDeviation="4" /></filter>
      <filter id="b8" filterUnits="userSpaceOnUse" x="-40" y="-40" width="420" height="400"><feGaussianBlur stdDeviation="9" /></filter>
    </defs>
    <g clipPath="url(#ring)">
      <rect width="338" height="326" fill="url(#sweep)" />
      <path d="M130 112C150 110 156 136 172 146C230 140 280 176 294 266" stroke="#a862ff" strokeWidth="42" fill="none" filter="url(#b8)" />
      <path d="M2 250C4 200 22 150 60 112" stroke="#20122e" strokeWidth="30" fill="none" filter="url(#b8)" />
      <path d="M50 262C48 225 56 190 80 160" stroke="#5a3890" strokeWidth="40" fill="none" filter="url(#b8)" />
      <ellipse cx="56" cy="252" rx="20" ry="34" fill="#b470ff" filter="url(#b8)" />
      <path d="M78 212C84 176 98 150 128 150C152 154 162 172 172 180C188 168 206 162 226 164C264 170 288 200 290 250L260 250L230 190L170 205L120 190Z" fill="#20122e" opacity=".75" filter="url(#b8)" />
      <path d="M84 216C88 188 100 167 128 165C150 167 160 189 171 197C186 184 202 177 222 177C256 181 279 208 280 250L255 250L230 205L170 216L120 200Z" fill="#20122e" filter="url(#b4)" />
      <path d="M206 119C232 122 252 134 262 148" stroke="#ffc4ff" strokeWidth="8" fill="none" filter="url(#b4)" />
    </g>
    <path d="M5 244A163.500 163.500 0 0 1 169 81" fill="none" stroke="#5ae0f0" strokeDasharray="4 2" />
    <path d="M169 81A163.500 163.500 0 0 1 332 244" fill="none" stroke="#70b8f0" strokeDasharray="7 2" />
    <path d="M168.500 0V82M168.500 212V244.500H267" fill="none" stroke="#c01420" />
    <path d="M168.500 82V211M5 244.500H71M267 244.500H332" fill="none" stroke="#c0b4c0" />
    <path d="M332 244.500H338" stroke="#c01420" />
    <g fill="#e81020">
      <circle cx="5.500" cy="244.500" r="2.500" />
      <circle cx="332" cy="244.500" r="2.500" />
      <circle cx="169" cy="81" r="2" />
      <circle cx="168.500" cy="244" r="1.500" />
    </g>
  </svg>
);

const LoftDialog = () => (
  <Dialog role="dialog" aria-labelledby="loft-title">
    <DialogTitle>
      <h2 id="loft-title">构造放样曲面...</h2>
      <CloseButton type="button" aria-label="关闭">
        <svg width="12" height="9" viewBox="0 0 12 9"><path d="M2 1l8 7M10 1L2 8" stroke="#fff" strokeWidth="2.500" /></svg>
      </CloseButton>
    </DialogTitle>
    <DialogBody>
      <PreviewColumn>
        <PreviewFrame><TorusPreview /></PreviewFrame>
        <PreviewFoot>
          <MessageBox aria-label="提示" readOnly />
          <SelectBox $w={99}>
            <SelectInput aria-label="显示类型" defaultValue="a"><option value="a">==显示类型==</option></SelectInput>
          </SelectBox>
        </PreviewFoot>
      </PreviewColumn>
      <FormColumn>
        <Group>
          <legend>轨迹线参数</legend>
          <Field $h={20}>
            <Label htmlFor="n">N轨迹条数:</Label>
            <Select id="n" w={72} text="一条" />
            <SmallPush type="button" $w={36}>&lt;&lt;</SmallPush>
          </Field>
          <Field $h={24} $off>
            <Label htmlFor="p">P对应方式:</Label>
            <Select id="p" w={116} text="等参数对应" off />
          </Field>
          <Field $off>
            <Label htmlFor="e">E高度效果:</Label>
            <Select id="e" w={116} text="截面相似" off />
          </Field>
        </Group>
        <Group>
          <legend>截面线参数</legend>
          <Field $h={26}>
            <Label htmlFor="s">S截面个数:</Label>
            <NumInput id="s" $w={35} defaultValue="3" />
            <BareLabel as="span" $w={41}>(1..99)</BareLabel>
            <SmallPush type="button" $w={36}>&lt;&lt;</SmallPush>
          </Field>
          <Field $h={23}>
            <Label htmlFor="v">V当前截面:</Label>
            <Select id="v" w={116} text="全部" />
          </Field>
          <Field>
            <Label htmlFor="b">B截面基点:</Label>
            <Select id="b" w={75} text="起点" />
            <SmallPush type="button" disabled $w={36}>&lt;&lt;</SmallPush>
          </Field>
          <Field $h={23}>
            <Label htmlFor="z">Z截面位置:</Label>
            <Select id="z" w={75} text="均匀分布" />
            <SmallPush type="button" disabled $w={36}>&lt;&lt;</SmallPush>
          </Field>
          <Field>
            <Label htmlFor="t">T过渡效果:</Label>
            <Select id="t" w={116} text="光滑过渡" />
          </Field>
          <Field $h={23} $off>
            <Label htmlFor="m" $w={37}>M修改:</Label>
            <Select id="m" w={90} text="基点X坐标" off />
            <SmallPush type="button" $w={45}>清零</SmallPush>
          </Field>
          <Slider type="range" aria-label="修改量" defaultValue={0} disabled />
          <Field>
            <BareLabel htmlFor="f" $w={45}>F数值:</BareLabel>
            <NumInput id="f" $w={45} $flat disabled />
            <Space $grow={1} />
            <SmallPush type="button" $w={83}>A效果预览</SmallPush>
            <Space $grow={1} />
          </Field>
        </Group>
        <GridGroup>
          <legend>网格精度</legend>
          <Field>
            <BareLabel htmlFor="x" $w={56}>X轨迹方向</BareLabel>
            <NumInput id="x" $w={31} defaultValue="0.2" />
            <Space $grow={1} />
            <BareLabel htmlFor="y" $w={56}>Y截面方向</BareLabel>
            <NumInput id="y" $w={31} defaultValue="0.2" />
          </Field>
        </GridGroup>
        <DialogButtons>
          <Push type="button" $w={79} $primary>O确定</Push>
          <Push type="button" $w={79}>C取消</Push>
        </DialogButtons>
      </FormColumn>
    </DialogBody>
  </Dialog>
);

/* ---------- data ---------- */

const MENU = ["文件(F)", "视图(V)", "绘制(D)", "编辑(E)", "变换(R)", "专业功能(Z)", "几何曲面(G)", "艺术曲面(A)", "刀具路径(P)", "艺术绘制(Y)", "测量(M)", "帮助(H)"];
const H_LABELS = Array.from({ length: 27 }, (_, i) => String(100 + i * 20));
const V_LABELS = Array.from({ length: 14 }, (_, i) => String(Math.abs(140 - i * 20)));
const COLORS = [
  "#ff0000", "#ffff00", "#0000ff", "#00ff00", "#00ffff", "#ff00ff", "#ffffff", "#000000", "#c4c2c4",
  "#ff6c20", "#a82828", "#ffc4cc", "#3cb070", "#3a8e84", "#ffd800", "#ffb05c", "#808000", "#800000",
  "#000080", "#008000", "#008080", "#800080", "#480080", "#7a9ec4", "#929292",
];
const SCRAPS: [string, number, number, number, string][] = [
  ["61px", 0, 26, 6, "#e8e0e0"], ["122px", 0, 34, 7, "#f4f0d0"], ["195px", 0, 48, 7, "#20c878"], ["218px", 0, 22, 7, "#f0f4f0"],
  ["275px", 0, 33, 7, "#f4f0c8"], ["1111px", 0, 29, 7, "#e8e4a0"], ["1264px", 0, 40, 6, "#1c2470"], ["1341px", 0, 36, 7, "#eceef0"],
  ["1415px", 0, 27, 7, "#e8e4a0"], ["1567px", 0, 40, 6, "#1c2470"], ["1643px", 0, 40, 6, "#1c2470"], ["1720px", 0, 40, 6, "#1c2470"],
  ["1795px", 0, 19, 6, "#1c2470"], ["calc(100% - 10px)", 12, 10, 8, "#10c010"], ["calc(100% - 10px)", 93, 10, 13, "#a04890"],
  ["calc(100% - 10px)", 107, 10, 8, "#1420c0"], ["calc(100% - 10px)", 116, 10, 7, "#10b010"], ["calc(100% - 10px)", 299, 10, 41, "#f8f4f8"],
  ["0", 16, 6, 14, "#60b090"], ["0", 200, 6, 26, "#8888d8"], ["0", 300, 6, 36, "#a8b0b8"], ["0", 506, 6, 42, "#f89010"],
  ["0", 612, 6, 16, "#e8f0f8"], ["0", 715, 6, 38, "#98a0a4"], ["0", 818, 6, 40, "#1058b0"], ["0", 910, 6, 40, "#089888"],
];

export default function App() {
  return (
    <Desktop>
      <GlobalStyle />
      {SCRAPS.map(([x, y, w, h, c], i) => <Scrap key={i} $x={x} $y={y} $w={w} $h={h} $c={c} />)}
      <DeskLabel $y={33}>清</DeskLabel>
      <DeskLabel $y={51}>10</DeskLabel>
      <DeskLabel $y={138}>ai</DeskLabel>
      <DeskLabel $y={154}>册</DeskLabel>
      <DeskLabel $y={345}>版(</DeskLabel>
      <Win>
        <TitleBar>
          <Logo width="15" height="15" viewBox="0 0 15 15" aria-hidden="true">
            <path d="M0 0h15v15H0z" fill="#0c3c78" />
            <path d="M5 4h4c4 0 3 7-2 7H3l1-4" fill="none" stroke="#fff" strokeWidth="2" />
          </Logo>
          <TitleText>打孔.jdp - JDPaint 5.21 Ultimate</TitleText>
          <CaptionButtons>
            <CaptionButton type="button" aria-label="最小化">
              <svg width="12" height="10" viewBox="0 0 12 10"><path d="M1.500 5.500h9v3h-9z" fill="#fff" stroke="#5c6c80" /></svg>
            </CaptionButton>
            <CaptionButton type="button" aria-label="还原">
              <svg width="12" height="10" viewBox="0 0 12 10"><path d="M1.500 1.500h9v7h-9zM4.500 4.500h3v1h-3z" fill="#fff" stroke="#5c6c80" /></svg>
            </CaptionButton>
            <CaptionButton type="button" aria-label="关闭">
              <svg width="12" height="10" viewBox="0 0 12 10"><path d="M2 1l8 8M10 1L2 9" stroke="#5c6c80" strokeWidth="4" /><path d="M2 1l8 8M10 1L2 9" stroke="#fff" strokeWidth="2" /></svg>
            </CaptionButton>
          </CaptionButtons>
        </TitleBar>
        <MenuBar>{MENU.map((m) => <MenuItem key={m} type="button">{m}</MenuItem>)}</MenuBar>

        <ToolbarArea>
          <ToolRowShort>
            <ToolGroup>
              <Tools list="new open save | cross" />
              <SplitOn>
                <ToolButton type="button" aria-label="捕捉框" $w={26} $h={23}><Icon name="boxx" /></ToolButton>
                <Drop type="button" aria-label="更多捕捉" />
              </SplitOn>
              <Tools list="| undo redo | del cut copy paste | axes" />
              <Drop type="button" aria-label="更多坐标" />
              <Tool n="cube" />
              <Drop type="button" aria-label="更多视图" disabled />
              <Tools list="| shieldA shieldB" />
            </ToolGroup>
            <ToolGroup $gap={4}>
              <Tools list="moveDup mirror rotate shear scale array arcArr wrap path center centerB group ungroup shieldA shieldB" />
            </ToolGroup>
            <ToolGroup $gap={3}>
              <Tools list="mPoint mDist mStep mBox mAng mRad" />
            </ToolGroup>
          </ToolRowShort>
          <ToolbarRow>
            <ToolGroup>
              <Tools list="pt line arc3 curve poly circle ellipse rect star octa" />
            </ToolGroup>
            <ToolGroup $gap={45}>
              <Tools list="trim extend fillet chamfer corner offset slot spiral boolA boolB boolC" />
            </ToolGroup>
          </ToolbarRow>
        </ToolbarArea>

        <Main>
          <SideTools>
            <SideGroup $first>
              {["select", "node", "text", "shape", "region", "blade", "relief", "nc"].map((n, i) => (
                <ToolButton key={n} type="button" aria-label={n} $on={i === 0} $w={31} $h={i === 0 ? 29 : 30}><Icon name={n} /></ToolButton>
              ))}
            </SideGroup>
            <SideGroup>
              {["zWin", "zOut", "zIn", "zPrev", "eye", "zObj"].map((n) => (
                <ToolButton key={n} type="button" aria-label={n} $h={28}><Icon name={n} /></ToolButton>
              ))}
              <SideSep />
              {["pan", "zDyn", "refresh"].map((n) => (
                <ToolButton key={n} type="button" aria-label={n} $h={28}><Icon name={n} /></ToolButton>
              ))}
            </SideGroup>
          </SideTools>

          <Workspace>
            <HRuler>
              {H_LABELS.map((l) => (
                <HSeg key={l}>
                  <HLabel>{l}</HLabel>
                  <HTick $h={11} $grow={2} />
                  <HTick $h={4} $grow={2} />
                  <HTick $h={5} $grow={1} />
                </HSeg>
              ))}
              <HUnit>6mm</HUnit>
              <HMarker />
            </HRuler>
            <VRuler>
              {V_LABELS.map((l, i) => (
                <VSeg key={i}>
                  <VTicks>{Array.from({ length: l.length === 3 ? 0 : l.length === 2 ? 1 : 3 }, (_, k) => <i key={k} />)}</VTicks>
                  {l.split("").map((c, k) => <span key={k}>{c}</span>)}
                </VSeg>
              ))}
            </VRuler>
            <Canvas>
              <Drawing aria-hidden="true">
                <g fill="none" stroke="#d42434" shapeRendering="crispEdges">
                  <circle cx="-252" cy="438" r="1117" />
                  <circle cx="-252" cy="438" r="1143" />
                  <path d="M294 740h9l6 5 2 7-3 8-6 4h-7l-7-4-2-8 2-8z" />
                </g>
                <path d="M1174 317v15l3-3 3 6 2-1-3-6h5z" fill="#fff" stroke="#444" />
              </Drawing>
              <LoftDialog />
            </Canvas>
            <Scroll $v>
              <ScrollArrow type="button" aria-label="向上" $dir="up" />
              <Space $grow={496} />
              <Thumb />
              <Space $grow={504} />
              <ScrollArrow type="button" aria-label="向下" $dir="down" />
            </Scroll>
            <Scroll>
              <ScrollArrow type="button" aria-label="向左" $dir="left" />
              <Space $grow={538} />
              <Thumb />
              <Space $grow={462} />
              <ScrollArrow type="button" aria-label="向右" $dir="right" />
            </Scroll>
          </Workspace>

          <Panel>
            <PanelHead>
              <Grip />
              <MiniButton type="button" aria-label="浮动"><svg width="6" height="6"><path d="M.500 1.500h5v4h-5zM0 .500h6" fill="none" stroke="#000" /></svg></MiniButton>
              <MiniButton type="button" aria-label="关闭面板"><svg width="6" height="6"><path d="M0 0l6 6M6 0L0 6" stroke="#000" strokeWidth="1.500" /></svg></MiniButton>
            </PanelHead>
            <TabRow><Tab type="button" aria-label="选择"><Icon name="selectTab" size={16} /></Tab></TabRow>
            <PanelBody>
              <NudgeRow>微调距离:<NudgeInput defaultValue="200.000" disabled /></NudgeRow>
              <NudgeRow>微调角度:<NudgeInput defaultValue="90.000" disabled /></NudgeRow>
              <PanelButtons>
                <Push type="button" $primary>[Q]选择</Push>
                <Push type="button">[R]加锁</Push>
                <Push type="button">[W]显示</Push>
                <Push type="button">[T]顺序</Push>
                <Push type="button">[E]图层</Push>
                <Push type="button">[Y]对齐</Push>
              </PanelButtons>
            </PanelBody>
          </Panel>
          <Palette>
            {["pencil", "noFill", "dropper", "palette"].map((n) => (
              <Swatch key={n} type="button" aria-label={n} $tool $c={n === "noFill" ? FACE : "#c8c6c8"}><Icon name={n} size={20} /></Swatch>
            ))}
            <Swatch type="button" aria-label="当前颜色" $c="#808000" />
            <PaletteArrow type="button" aria-label="上翻" $up />
            <PaletteArrow type="button" aria-label="下翻" />
            {COLORS.map((c) => <Swatch key={c} type="button" aria-label={c} $c={c} $picked={c === "#00ff00"} />)}
          </Palette>
        </Main>

        <BottomBar>
          <ToolGroup>
            <Tools list="sEnd* sNear sMid* sInt* sCen* sQuad* sPerp sTan | sGrid* sAxis* | fA fB fC | lA lB | pA pB | plA plB plC delB" />
          </ToolGroup>
          <ToolGroup $gap={24}>
            <Tools list="bulbG bulbY bulbP swap left right | layers styles filter" />
          </ToolGroup>
        </BottomBar>
        <StatusBar>
          <StatusCell>选择工具: 没有选中对象</StatusCell>
          <StatusCoord $w={188}>287.148 159.139</StatusCoord>
          <KeyState type="button">U</KeyState>
          <StatusCell $w={183}>&nbsp;</StatusCell>
          <SizeGrip width="10" height="10" viewBox="0 0 10 10" aria-hidden="true">
            <path d="M8 0h2v2H8zM8 4h2v2H8zM8 8h2v2H8zM4 4h2v2H4zM4 8h2v2H4zM0 8h2v2H0z" fill="#c8c4c6" />
          </SizeGrip>
        </StatusBar>
      </Win>
    </Desktop>
  );
}
